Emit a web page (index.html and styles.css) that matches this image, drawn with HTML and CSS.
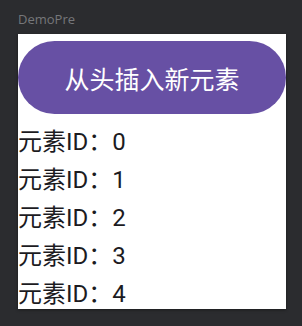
FILE: index.html
```html
<!DOCTYPE html>
<html>
<head>
<meta charset="utf-8">
<link rel="stylesheet" href="styles.css">
</head>
<body>
<div class="window">
  <div class="title">DemoPre</div>
  <div class="panel">
    <button class="btn">从头插入新元素</button>
    <div class="list">
      <div class="row">元素ID：0</div>
      <div class="row">元素ID：1</div>
      <div class="row">元素ID：2</div>
      <div class="row">元素ID：3</div>
      <div class="row">元素ID：4</div>
    </div>
  </div>
</div>
</body>
</html>
```
FILE: styles.css
```css
html, body {
  margin: 0;
  padding: 0;
  background: #2b2c2f;
  width: 302px;
  height: 326px;
  overflow: hidden;
}
.window {
  padding: 11px 16px 0 18px;
}
.title {
  font-family: "Open Sans", "Noto Sans", sans-serif;
  font-size: 13px;
  line-height: 16px;
  color: #76777a;
  height: 23px;
}
.panel {
  background: #ffffff;
  width: 268px;
  height: 275px;
  overflow: hidden;
  box-shadow: 0 1px 3px rgba(0,0,0,0.4);
}
.btn {
  display: block;
  margin: 7px 0 0 0;
  width: 268px;
  height: 73px;
  border: none;
  border-radius: 37px;
  background: #6750a4;
  color: #ffffff;
  font-family: Roboto, "Noto Sans CJK SC", sans-serif;
  font-size: 25px;
  padding: 0;
}
.list {
  margin-top: 9px;
}
.row {
  font-family: Roboto, "Noto Sans CJK SC", sans-serif;
  font-size: 24px;
  line-height: 38px;
  color: #1c1b1f;
  white-space: nowrap;
}
```
